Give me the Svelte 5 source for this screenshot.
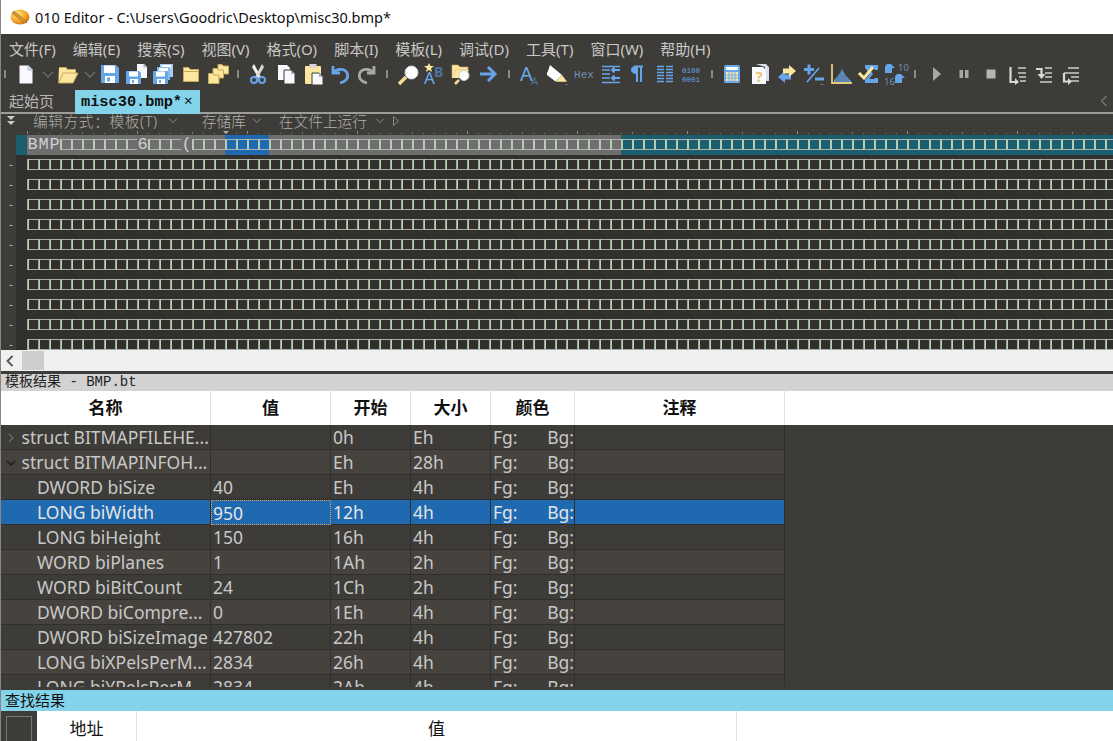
<script>
	const tools = [
		{ x: 5, name: 'sep' }, { x: 26, name: 'new' }, { x: 48, name: 'chev' }, { x: 68, name: 'open' },
		{ x: 90, name: 'chev' }, { x: 110, name: 'save' }, { x: 136, name: 'saveas' }, { x: 163, name: 'saveall' },
		{ x: 191, name: 'folder' }, { x: 218, name: 'folders' }, { x: 238, name: 'sep' }, { x: 258, name: 'cut' },
		{ x: 286, name: 'copy' }, { x: 313, name: 'paste' }, { x: 340, name: 'undo' }, { x: 367, name: 'redo' },
		{ x: 387, name: 'sep' }, { x: 408, name: 'find' }, { x: 435, name: 'replace' }, { x: 461, name: 'findfiles' },
		{ x: 488, name: 'goto' }, { x: 509, name: 'sep' }, { x: 530, name: 'font' }, { x: 557, name: 'mark' },
		{ x: 584, name: 'hex' }, { x: 611, name: 'wrap' }, { x: 637, name: 'para' }, { x: 665, name: 'cols' },
		{ x: 691, name: 'bits' }, { x: 712, name: 'sep' }, { x: 732, name: 'calc' }, { x: 760, name: 'help' },
		{ x: 787, name: 'swap' }, { x: 814, name: 'plus' }, { x: 841, name: 'chart' }, { x: 868, name: 'sum' },
		{ x: 895, name: 'base' }, { x: 915, name: 'sep' }, { x: 937, name: 'play' }, { x: 964, name: 'pause' },
		{ x: 991, name: 'stop' }, { x: 1018, name: 'stepin' }, { x: 1044, name: 'stepover' }, { x: 1071, name: 'stepout' }
	];

	const blue = '#66a5e8';
	const pale = '#fbe7a0';
	const icons = {
		sep: `<rect x="11" y="8" width="2" height="8" fill="#8a8a8a"/>`,
		chev: `<path d="M7 10l5 5 5-5" fill="none" stroke="#6d6d6b" stroke-width="1.3"/>`,
		new: `<path d="M5.500 3.500h9l4 4v14h-13z" fill="#f7f9fd"/><path d="M14 3.500v4.500h4.500" fill="#cfd8e6" stroke="#aab6c8" stroke-width=".8"/>`,
		open: `<path d="M3 5h7l2 2h8v4H7l-3 9H2z" fill="#c9a958"/><path d="M3 6h6.500l2 2H19v3H7l-3 8H3z" fill="${pale}"/><path d="M7 11h15l-5 10H2.500z" fill="${pale}" stroke="#c9a958"/>`,
		save: `<path d="M3 3h15l3 3v15H3z" fill="${blue}"/><rect x="6" y="3.500" width="11" height="7.500" fill="#fff"/><rect x="7" y="14" width="10" height="7" fill="#fff"/><rect x="9" y="15.500" width="3" height="4" fill="${blue}"/>`,
		saveas: `<path d="M13 2h7l3 3v11h-10z" fill="#f7f9fd"/><path d="M19.500 2v3.500h3.500" fill="#aab6c8"/><path d="M2 9h13l2 2v11H2z" fill="${blue}"/><rect x="5" y="9.500" width="9" height="5" fill="#fff"/><rect x="6" y="17" width="8" height="5" fill="#fff"/><rect x="8" y="18" width="2" height="3" fill="${blue}"/>`,
		saveall: `<path d="M9 2h13v13H9z" fill="#a8cdf2"/><rect x="11" y="3" width="9" height="3" fill="#fff"/><path d="M6 5h13v13H6z" fill="#86b9ee"/><rect x="8" y="6" width="9" height="3" fill="#fff"/><path d="M2 9h14l1 1v12H2z" fill="${blue}"/><rect x="5" y="9.500" width="9" height="5" fill="#fff"/><rect x="6" y="17" width="8" height="5" fill="#fff"/><rect x="8" y="18" width="2" height="3" fill="${blue}"/>`,
		folder: `<path d="M4.500 5.500h5l2 2h8v12h-15z" fill="${pale}" stroke="#c9a958"/><path d="M5 9.500h14" stroke="#c9a958"/>`,
		folders: `<path d="M12 2.500h4l1.500 1.500h5v8h-10.500z" fill="${pale}" stroke="#c9a958"/><path d="M7 6.500h4l1.500 1.500h5v8H7z" fill="${pale}" stroke="#c9a958"/><path d="M2.500 11.500h4l1.500 1.500h5v8.500H2.500z" fill="${pale}" stroke="#c9a958"/>`,
		cut: `<path d="M8 2l7 13-2 2L6 5z" fill="#f3f3f3"/><path d="M16 2L9 15l2 2 7-12z" fill="#d8d8d8"/><circle cx="8" cy="18" r="3" fill="none" stroke="${blue}" stroke-width="2"/><circle cx="16" cy="18" r="3" fill="none" stroke="${blue}" stroke-width="2"/>`,
		copy: `<path d="M4 3h9l3 3v12H4z" fill="#f7f9fd"/><path d="M10 8h7l4 4v10H10z" fill="#f7f9fd" stroke="#3e3c38"/><path d="M17 8v4h4" fill="#aab6c8"/>`,
		paste: `<rect x="4" y="4" width="16" height="18" rx="1" fill="${pale}"/><rect x="8.500" y="2" width="7" height="4" fill="#d8d8d8"/><path d="M11 11h7l4 4v8H11z" fill="#f7f9fd" stroke="#3e3c38"/><path d="M18 11v4h4" fill="#aab6c8"/>`,
		undo: `<path d="M5 4v7h7" fill="none" stroke="${blue}" stroke-width="2.800"/><path d="M5.500 10.500C9 6 18 6 19.500 12c1 5-3 8-7.500 9" fill="none" stroke="${blue}" stroke-width="2.800"/>`,
		redo: `<path d="M19 4v7h-7" fill="none" stroke="#a8a8a6" stroke-width="2.800"/><path d="M18.500 10.500C15 6 6 6 4.500 12c-1 5 3 8 7.500 9" fill="none" stroke="#a8a8a6" stroke-width="2.800"/>`,
		find: `<path d="M10 15l-7 7" stroke="#f5dd95" stroke-width="3.500"/><circle cx="15.500" cy="10.500" r="6.500" fill="#fff" stroke="#cfd6df"/>`,
		replace: `<text x="1" y="22" font-size="17" font-family="Noto Sans" fill="#6aa9ec">A</text><text x="11" y="15" font-size="14" font-family="Noto Sans" font-weight="700" fill="#4b739f">B</text><path d="M6 1l1.500 3H11L8 6.500 9 10 6 8l-3 2 1-3.500L1 4h3.500z" fill="${pale}"/>`,
		findfiles: `<path d="M3 3h6l2 2h8v3H7l-3 8H3z" fill="${pale}" stroke="#c9a958" stroke-width=".6"/><path d="M7 8h13l-4 8H3z" fill="${pale}"/><path d="M10 18l-4 4" stroke="#f5dd95" stroke-width="2.500"/><circle cx="15" cy="13.500" r="5" fill="#fff" stroke="#cfd6df"/>`,
		goto: `<path d="M4 12h15M12 5l7 7-7 7" fill="none" stroke="${blue}" stroke-width="3"/>`,
		font: `<text x="2" y="19" font-size="20" font-family="Noto Sans" fill="#6aa9ec">A</text><text x="13" y="23" font-size="11" font-family="Noto Sans" fill="#4b739f">A</text>`,
		mark: `<path d="M5 3l12 10-6.500 6.500L2 13q-.5-2 1-4z" fill="#fff"/><path d="M17 13l5 6.700H10.500z" fill="${pale}"/><path d="M20 22h3l-1.500 1.500z" fill="#777"/>`,
		hex: `<text x="12" y="16" text-anchor="middle" font-size="11" font-family="Liberation Mono" fill="#6d8fb3">Hex</text>`,
		wrap: `<path d="M3 4.500h18M3 20.500h18M3 8h8M3 12h8M3 16h8" stroke="${blue}" stroke-width="1.600" fill="none"/><path d="M21 8h-7M15.500 5.500L13 8l2.500 2.500M21 16h-7M15.500 13.500L13 16l2.500 2.500" stroke="${blue}" stroke-width="2" fill="none"/>`,
		para: `<path d="M9 4.500h9M12 4.500V20M16 4.500V20" stroke="${blue}" stroke-width="2" fill="none"/><path d="M12 4C7 4 6 6 6 8s2 4 6 4z" fill="${blue}"/>`,
		cols: `<path d="M4 4.500h7M4 7.500h7M4 10.500h7M4 13.500h7M4 16.500h7M4 19.500h7M13 4.500h7M13 7.500h7M13 10.500h7M13 13.500h7M13 16.500h7M13 19.500h7" stroke="${blue}" stroke-width="1.400"/>`,
		bits: `<text x="12" y="11" text-anchor="middle" font-size="7.500" font-family="Liberation Mono" fill="${blue}">0100</text><text x="12" y="19.500" text-anchor="middle" font-size="7.500" font-family="Liberation Mono" fill="${blue}">0001</text>`,
		calc: `<rect x="4" y="3" width="16" height="18" rx="1.500" fill="#6aa9ec"/><rect x="6" y="5" width="12" height="3" fill="#fff"/><path d="M6 10h12v9H6z" fill="${pale}"/><path d="M9 10v9M12 10v9M15 10v9M6 13h12M6 16h12" stroke="#6aa9ec"/>`,
		help: `<path d="M8 2h10l3 3v14h-4V5z" fill="#d8dde6"/><path d="M4 5h11l3 3v14H4z" fill="#f7f9fd"/><text x="11" y="20" text-anchor="middle" font-size="15" font-weight="700" font-family="Noto Sans" fill="#e8c768">?</text>`,
		swap: `<path d="M3 15l7-6v3.500h6v5h-6v3.500z" fill="${blue}"/><path d="M21 9l-7-6v3.500H8v5h6V15z" fill="${pale}"/>`,
		plus: `<path d="M7 2.500v10M2 7.500h10" stroke="${blue}" stroke-width="3"/><path d="M5 20L17 6" stroke="${blue}" stroke-width="1.800"/><path d="M13 17h9" stroke="${blue}" stroke-width="3"/><path d="M18 22h4l-2 1.500z" fill="#777"/>`,
		chart: `<path d="M3 2v19h20" fill="none" stroke="#e5ca7c" stroke-width="1.800"/><path d="M5 20v-2l3-3 2-3 1-1 2-4 2 4 2 3 2 2 3 3v1z" fill="${blue}"/><path d="M7 20v-6M9 20v-8M11 20v-10M13 20v-12M15 20v-8M17 20v-6M19 20v-3" stroke="#3e3c38" stroke-width=".6"/>`,
		sum: `<path d="M9 3h13v5h-3l-1-1H13l4 5-4 5h5l1-1h3v5H9v-3l5-6-5-6z" fill="${blue}"/><path d="M3 11l5 5 9-11" fill="none" stroke="${pale}" stroke-width="3"/>`,
		base: `<text x="15" y="9" font-size="9.500" font-family="Noto Sans" fill="#6d8fb3">10</text><text x="1" y="23" font-size="9.500" font-family="Noto Sans" fill="#6d8fb3">16</text><path d="M9 11V6h3l-4-4H5C3 2 2 4 2 6v5z" fill="${blue}"/><path d="M15 13v5h-3l4 4h3c2 0 3-2 3-4v-5z" transform="rotate(180 17 17)" fill="${blue}"/>`,
		play: `<path d="M8 5l8 7-8 7z" fill="#a8a8a6"/>`,
		pause: `<rect x="7.500" y="8" width="3.500" height="8" fill="#a8a8a6"/><rect x="13" y="8" width="3.500" height="8" fill="#a8a8a6"/>`,
		stop: `<rect x="7.500" y="7.500" width="9" height="9" fill="#b5b5b3"/>`,
		stepin: `<path d="M4.500 5v15h5" fill="none" stroke="#d8d8d8" stroke-width="2.200"/><path d="M9 16l4 4-4 3z" fill="#d8d8d8"/><path d="M12 6h8M12 11h8M13 15h7M14 19h6" stroke="#a8a8a6" stroke-width="1.800"/>`,
		stepover: `<path d="M4 7h5.500v7" fill="none" stroke="#d8d8d8" stroke-width="2.200"/><path d="M5.500 12h8l-4 5z" fill="#d8d8d8"/><path d="M13 6h7M13 11h7M13 15h7M8 20h12" stroke="#a8a8a6" stroke-width="1.800"/>`,
		stepout: `<path d="M9 6h11M5 11h15M12 15h8M12 19h8" stroke="#a8a8a6" stroke-width="1.800"/><path d="M5 11v8.500h5" fill="none" stroke="#d8d8d8" stroke-width="2.200"/><path d="M9 16l4 3.500L9 23z" fill="#d8d8d8"/>`
	};

	const menus = ['文件(F)', '编辑(E)', '搜索(S)', '视图(V)', '格式(O)', '脚本(I)', '模板(L)', '调试(D)', '工具(T)', '窗口(W)', '帮助(H)'];

	// first bytes of the file, shown as text where printable
	const printable = { 0: 'B', 1: 'M', 2: 'P', 10: '6', 14: '(' };
	const bytes = Array.from({ length: 99 }, (_, i) => ({
		ch: printable[i],
		kind: i >= 18 && i < 22 ? 'sel' : i < 54 ? 'head' : 'pix'
	}));
	const emptyRows = Array.from({ length: 10 });

	const fields = [
		{ name: 'struct BITMAPFILEHE...', value: '', start: '0h', size: 'Eh', open: false, group: true },
		{ name: 'struct BITMAPINFOH...', value: '', start: 'Eh', size: '28h', open: true, group: true },
		{ name: 'DWORD biSize', value: '40', start: 'Eh', size: '4h' },
		{ name: 'LONG biWidth', value: '950', start: '12h', size: '4h', selected: true },
		{ name: 'LONG biHeight', value: '150', start: '16h', size: '4h' },
		{ name: 'WORD biPlanes', value: '1', start: '1Ah', size: '2h' },
		{ name: 'WORD biBitCount', value: '24', start: '1Ch', size: '2h' },
		{ name: 'DWORD biCompre...', value: '0', start: '1Eh', size: '4h' },
		{ name: 'DWORD biSizeImage', value: '427802', start: '22h', size: '4h' },
		{ name: 'LONG biXPelsPerM...', value: '2834', start: '26h', size: '4h' },
		{ name: 'LONG biYPelsPerM...', value: '2834', start: '2Ah', size: '4h' }
	];
</script>

<div class="app">
	<header class="title">
		<svg class="logo" width="20" height="18" viewBox="0 0 20 18">
			<defs>
				<radialGradient id="ball" cx="0.35" cy="0.3" r="0.8">
					<stop offset="0" stop-color="#ffe98a" />
					<stop offset="0.6" stop-color="#f5a623" />
					<stop offset="1" stop-color="#c8641a" />
				</radialGradient>
			</defs>
			<ellipse cx="10" cy="9" rx="9.500" ry="7.500" fill="url(#ball)" />
			<path d="M4 3l11 9 2 3-4-1L2 5z" fill="#d9962a" stroke="#8a5a1a" stroke-width=".5" />
		</svg>
		<span>010 Editor - C:\Users\Goodric\Desktop\misc30.bmp*</span>
	</header>

	<nav class="menu">
		{#each menus as item}
			<span>{item}</span>
		{/each}
	</nav>

	<div class="tools">
		{#each tools as tool, i}
			<span class="tool" style="margin-left: {i ? tool.x - tools[i - 1].x - 20 : tool.x - 11}px">
				<svg width="24" height="24" viewBox="0 0 24 24">{@html icons[tool.name]}</svg>
			</span>
		{/each}
	</div>

	<div class="tabs">
		<span class="home">起始页</span>
		<span class="tab">misc30.bmp*<b>×</b></span>
		<svg class="tab-scroll" width="8" height="12" viewBox="0 0 8 12"><path d="M6.500 1L1.500 6l5 5" fill="none" stroke="#777" stroke-width="1.300" /></svg>
	</div>

	<div class="viewbar">
		<svg class="collapse" width="10" height="10" viewBox="0 0 10 10"><path d="M1 0h8L5 4zM1 5h8L5 9z" fill="#c8c8c8" /></svg>
		<span class="vb-a">编辑方式：模板(T)</span>
		<svg width="10" height="6" viewBox="0 0 10 6"><path d="M1 .5l4 4 4-4" fill="none" stroke="#888" /></svg>
		<span class="vb-b">存储库</span>
		<svg width="10" height="6" viewBox="0 0 10 6"><path d="M1 .5l4 4 4-4" fill="none" stroke="#888" /></svg>
		<span class="vb-c">在文件上运行</span>
		<svg width="10" height="6" viewBox="0 0 10 6"><path d="M1 .5l4 4 4-4" fill="none" stroke="#888" /></svg>
		<svg class="vb-run" width="6" height="10" viewBox="0 0 6 10"><path d="M.5.500l5 4.500-5 4.500z" fill="none" stroke="#888" /></svg>
	</div>

	<div class="ruler"></div>

	<section class="hex">
		<div class="hex-row first">
			<span class="mark"></span>
			{#each bytes as b}
				<span class="cell {b.kind}" class:tofu={!b.ch}>{b.ch ?? ''}</span>
			{/each}
		</div>
		{#each emptyRows}
			<div class="hex-row">
				<span class="dash">-</span>
				<span class="boxes"></span>
			</div>
		{/each}
	</section>

	<div class="hscroll">
		<svg width="8" height="12" viewBox="0 0 8 12"><path d="M6.500 1L1.500 6l5 5" fill="none" stroke="#555" stroke-width="1.800" /></svg>
		<span class="thumb"></span>
	</div>

	<div class="panel-title">模板结果 - BMP.bt</div>

	<section class="results">
		<div class="row heading">
			<span>名称</span><span>值</span><span>开始</span><span>大小</span><span>颜色</span><span>注释</span>
		</div>
		<div class="body">
			{#each fields as f, i}
				<div class="row" class:alt={i % 2 === 1} class:selected={f.selected}>
					<span class="name" class:group={f.group}>
						{#if f.group}
							<svg width="10" height="12" viewBox="0 0 10 12">
								{#if f.open}
									<path d="M1 4l4 4 4-4" fill="none" stroke="#1f1e1c" stroke-width="1.500" />
								{:else}
									<path d="M3 2l4 4-4 4" fill="none" stroke="#6a6a68" stroke-width="1.500" />
								{/if}
							</svg>
						{/if}
						{f.name}
					</span>
					<span class="val" class:focus={f.selected}>{f.value}</span>
					<span>{f.start}</span>
					<span>{f.size}</span>
					<span class="fgbg"><i>Fg:</i><i>Bg:</i></span>
					<span></span>
				</div>
			{/each}
		</div>
	</section>

	<div class="find-title">查找结果</div>
	<div class="find-head">
		<span class="corner"><i></i></span>
		<span class="addr">地址</span>
		<span class="value">值</span>
	</div>
</div>

<style>
	:global(body) {
		background: #3e3c38;
		overflow: hidden;
	}

	.app {
		width: 1113px;
		height: 741px;
		overflow: hidden;
		background: #3e3c38;
		color: #c8c8c8;
		font-family: 'Noto Sans', 'Noto Sans CJK SC', sans-serif;
		border-left: 1px solid #8a8680;
		box-sizing: border-box;
	}

	.title {
		height: 34px;
		margin-left: -1px;
		background: #fff;
		color: #111;
		display: flex;
		align-items: center;
		gap: 5px;
		padding-left: 10px;
		font-size: 14.500px;
	}

	.menu {
		height: 28px;
		display: flex;
		align-items: center;
		gap: 17px;
		padding-left: 8px;
		font-size: 15px;
	}

	.tools {
		height: 24px;
		display: flex;
		align-items: center;
	}

	.tool {
		width: 20px;
		height: 24px;
		flex: none;
		display: flex;
		justify-content: center;
	}

	.tool svg {
		flex: none;
		overflow: visible;
	}

	.tabs {
		position: relative;
		height: 22px;
		margin-top: 4px;
		display: flex;
		align-items: flex-end;
		border-bottom: 2px solid #9c9c9c;
		font-size: 15px;
	}

	.home {
		margin-left: 8px;
		line-height: 22px;
		color: #b8b8b8;
	}

	.tab {
		margin-left: 21px;
		width: 125px;
		height: 24px;
		margin-bottom: -2px;
		box-sizing: border-box;
		background: #83d3ea;
		color: #111;
		padding-left: 6px;
		font: bold 15.300px/24px 'Liberation Mono', monospace;
		white-space: nowrap;
	}

	.tab b {
		margin-left: 2px;
		font: 400 15px 'Noto Sans', sans-serif;
	}

	.tab-scroll {
		position: absolute;
		right: 5px;
		top: 5px;
	}

	.viewbar {
		height: 16px;
		box-sizing: border-box;
		padding-bottom: 2px;
		display: flex;
		align-items: center;
		font-size: 14.700px;
		line-height: 14px;
		color: #b0b0ae;
		font-weight: 300;
	}

	.collapse {
		margin-left: 5px;
	}

	.vb-a {
		margin-left: 17px;
		margin-right: 10px;
		letter-spacing: 0.600px;
	}

	.vb-b {
		margin-left: 24px;
		margin-right: 6px;
	}

	.vb-c {
		margin-left: 17px;
		margin-right: 8px;
	}

	.vb-run {
		margin-left: 8px;
	}

	.ruler {
		position: relative;
		height: 5px;
		margin-left: 26px;
		background:
			repeating-linear-gradient(90deg, #8a8a88 0 1px, transparent 1px 110px) 0 1px / 100% 3px no-repeat,
			repeating-linear-gradient(90deg, #7a7a78 0 1px, transparent 1px 55px) 0 2px / 100% 2px no-repeat,
			repeating-linear-gradient(90deg, #7a7a78 0 1px, transparent 1px 11px) 0 3px / 100% 1px no-repeat;
	}

	/* caret marker over the ruler */
	.ruler::after {
		content: '';
		position: absolute;
		left: 196px;
		top: 1px;
		border: 3px solid transparent;
		border-top-color: #b0b0ae;
		border-bottom: none;
	}

	.hex {
		height: 215px;
		overflow: hidden;
		padding-left: 15px;
		background: linear-gradient(#3e3c38, #3e3c38) 0 0 / 15px 100% no-repeat, #32302d;
	}

	.hex-row {
		display: flex;
		height: 20px;
		width: 1200px;
	}

	.mark {
		flex: none;
		width: 11px;
		background: #1b5f6e;
	}

	.dash {
		flex: none;
		width: 9px;
		margin-left: -15px;
		margin-right: 4px;
		padding-left: 8px;
		font-size: 12px;
		line-height: 19px;
		color: #b0b0b0;
	}

	.boxes {
		flex: none;
		width: 1100px;
		height: 11px;
		margin-top: 4px;
		margin-left: 5px;
		background:
			repeating-linear-gradient(90deg, #8fb0a0 0 1px, #c3cfa6 1px 2px, transparent 2px 11px),
			linear-gradient(#a8a8a6, #a8a8a6) 0 0 / 100% 1px no-repeat,
			linear-gradient(#a8a8a6, #a8a8a6) 0 100% / 100% 1px no-repeat;
	}

	.cell {
		flex: none;
		width: 11px;
		height: 20px;
		font: 17px/20px 'Liberation Mono', monospace;
		text-align: center;
		color: #d0d0d0;
	}

	.cell.head {
		background: #6e6e6e;
	}

	.cell.sel {
		background: #1f69b0;
	}

	.cell.pix {
		background: #1b5f6e;
	}

	.cell.tofu::after {
		content: '';
		display: block;
		box-sizing: border-box;
		height: 11px;
		margin-top: 4px;
		border-top: 1px solid #b0b0ae;
		border-bottom: 1px solid #b0b0ae;
		border-left: 2px solid #b4cdb4;
	}

	.hscroll {
		height: 21px;
		display: flex;
		align-items: center;
		background: #f0f0f0;
		padding-left: 5px;
	}

	.thumb {
		width: 22px;
		height: 19px;
		margin-left: 8px;
		background: #cdcdcd;
	}

	.panel-title {
		margin-top: 3px;
		height: 17px;
		background: #d2d2d2;
		color: #222;
		padding-left: 4px;
		font: 14px/17px 'Liberation Mono', 'Noto Sans CJK SC', monospace;
	}

	.results {
		height: 296px;
		overflow: hidden;
	}

	.row {
		display: grid;
		grid-template-columns: 210px 120px 80px 80px 84px 210px;
		width: 784px;
		height: 25px;
		font-size: 17.500px;
		line-height: 25px;
		background: #3e3c38;
	}

	.row > span {
		box-sizing: border-box;
		border-right: 1px solid #312f2c;
		border-bottom: 1px solid #312f2c;
		padding-left: 2px;
		white-space: nowrap;
		overflow: hidden;
	}

	.row .name {
		padding-left: 36px;
	}

	.row .name.group {
		padding-left: 5px;
	}

	.name svg {
		margin-right: 1px;
	}

	.row.alt {
		background: #46423d;
	}

	.row.selected {
		background: #1f69b0;
		color: #e4e4e4;
	}

	.row .val.focus {
		border: 1px dotted #e8a050;
		padding-left: 1px;
	}

	.fgbg {
		display: flex;
		justify-content: space-between;
		padding-right: 0;
	}

	.fgbg i {
		font-style: normal;
	}

	.row.heading {
		height: 34px;
		background: #fff;
		color: #111;
		font-size: 17px;
		font-weight: 700;
		line-height: 34px;
		width: 1112px;
		grid-template-columns: 210px 120px 80px 80px 84px 210px 1fr;
	}

	.row.heading > span {
		text-align: center;
		border-bottom: none;
		border-right: 1px solid #e2e2e2;
		padding: 0;
	}

	.find-title {
		margin-top: 3px;
		height: 21px;
		background: #83d3ea;
		color: #111;
		padding-left: 4px;
		font-size: 15px;
		line-height: 21px;
	}

	.find-head {
		height: 30px;
		display: grid;
		grid-template-columns: 36px 100px 600px 1fr;
		background: #fff;
		color: #111;
		font-size: 17px;
		line-height: 36px;
		text-align: center;
	}

	.find-head > span {
		border-right: 1px solid #e2e2e2;
	}

	.corner {
		background: #3e3c38;
		padding: 5px 5px 0;
		box-sizing: border-box;
		border-right: none !important;
	}

	.corner i {
		display: block;
		height: 30px;
		border: 1px solid #777;
		box-sizing: border-box;
	}
</style>
